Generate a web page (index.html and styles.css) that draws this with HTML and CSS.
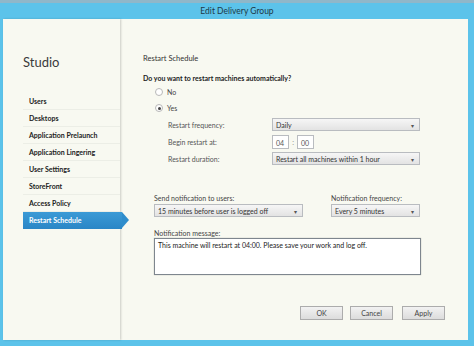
FILE: index.html
```html
<!DOCTYPE html>
<html lang="en">
<head>
  <meta charset="UTF-8">
  <title>Edit Delivery Group</title>
  <link rel="stylesheet" href="styles.css">
</head>
<body>
  <div class="screen">
    <div class="top-strip"></div>
    <div class="title-bar">Edit Delivery Group</div>

    <div class="window-body">
      <!-- left nav -->
      <div class="sidebar">
        <div class="studio">Studio</div>
        <ul class="nav">
          <li>Users</li>
          <li>Desktops</li>
          <li>Application Prelaunch</li>
          <li>Application Lingering</li>
          <li>User Settings</li>
          <li>StoreFront</li>
          <li>Access Policy</li>
          <li class="active">Restart Schedule</li>
        </ul>
      </div>

      <!-- page -->
      <div class="main">
        <div class="page-title">Restart Schedule</div>
        <div class="question">Do you want to restart machines automatically?</div>

        <div class="radio-row"><span class="radio"></span>No</div>
        <div class="radio-row"><span class="radio checked"></span>Yes</div>

        <div class="settings">
          <div class="setting-row">
            <span class="setting-label">Restart frequency:</span>
            <div class="select wide">Daily<span class="caret">▾</span></div>
          </div>
          <div class="setting-row">
            <span class="setting-label">Begin restart at:</span>
            <div class="time">
              <div class="time-box">04</div>
              <span class="colon">:</span>
              <div class="time-box">00</div>
            </div>
          </div>
          <div class="setting-row">
            <span class="setting-label">Restart duration:</span>
            <div class="select wide">Restart all machines within 1 hour<span class="caret">▾</span></div>
          </div>
        </div>

        <div class="notify">
          <div class="notify-col">
            <div class="field-label">Send notification to users:</div>
            <div class="select notify-select">15 minutes before user is logged off<span class="caret">▾</span></div>
          </div>
          <div class="notify-col">
            <div class="field-label">Notification frequency:</div>
            <div class="select freq-select">Every 5 minutes<span class="caret">▾</span></div>
          </div>
        </div>

        <div class="field-label">Notification message:</div>
        <div class="message">This machine will restart at 04:00. Please save your work and log off.</div>

        <div class="buttons">
          <button class="btn">OK</button>
          <button class="btn">Cancel</button>
          <button class="btn apply">Apply</button>
        </div>
      </div>
    </div>
  </div>
</body>
</html>
```

FILE: styles.css
```css
body, html {
  margin: 0;
  padding: 0;
  width: 100%;
  height: 100%;
  overflow: hidden;
}

.screen {
  width: 474px;
  height: 346px;
  background: #5cc3ea;
  display: flex;
  flex-direction: column;
  font-family: Lato, "Open Sans", sans-serif;
  color: #333;
}

.top-strip {
  height: 3px;
  background: #8fb7c9;
}

.title-bar {
  height: 16px;
  line-height: 16px;
  text-align: center;
  font-size: 8.5px;
  color: #1e3a48;
}

.window-body {
  flex: 1;
  margin: 0 6px 6px 3px;
  background: #f8f9f1;
  display: flex;
}

/* left nav */
.sidebar {
  width: 117px;
  padding-top: 35px;
  box-shadow: 1px 0 2px rgba(0, 0, 0, 0.18);
  position: relative;
  z-index: 1;
}

.studio {
  padding-left: 20px;
  font-size: 13px;
  color: #3b3b3b;
  height: 39px;
}

.nav {
  list-style: none;
  margin: 0;
  padding: 0 0 0 20px;
}

.nav li {
  height: 17px;
  line-height: 17px;
  padding-left: 6px;
  font-size: 7px;
  font-weight: bold;
  color: #222;
  border-bottom: 1px solid #eceee6;
  box-sizing: border-box;
  white-space: nowrap;
}

.nav li.active {
  position: relative;
  margin-right: -2px;
  color: #fff;
  background: linear-gradient(#3b9ad6, #2a86c6);
  border-bottom: none;
}

.nav li.active::after {
  content: "";
  position: absolute;
  right: -7px;
  top: 0;
  border-left: 7px solid #2f8dcc;
  border-top: 8.5px solid transparent;
  border-bottom: 8.5px solid transparent;
}

/* page */
.main {
  flex: 1;
  padding: 35px 0 0 23px;
  font-size: 7px;
}

.page-title {
  font-size: 7.5px;
  color: #333;
  height: 20px;
}

.question {
  font-weight: bold;
  color: #222;
  height: 10px;
}

.radio-row {
  display: flex;
  align-items: center;
  height: 16px;
  padding-left: 12px;
  color: #444;
}

.radio {
  width: 6px;
  height: 6px;
  border: 1px solid #b8b8b8;
  border-radius: 50%;
  background: #fff;
  margin-right: 4px;
  display: flex;
  align-items: center;
  justify-content: center;
}

.radio.checked::after {
  content: "";
  width: 3px;
  height: 3px;
  border-radius: 50%;
  background: #444;
}

.settings {
  padding: 0 0 0 25px;
}

.setting-row {
  display: flex;
  align-items: center;
  height: 17px;
  color: #555;
}

.setting-label {
  width: 104px;
}

.select {
  position: relative;
  height: 13px;
  line-height: 13px;
  box-sizing: border-box;
  padding-left: 3px;
  border: 1px solid #b9bcc0;
  background: linear-gradient(#f6f6f6, #e3e3e3);
  color: #333;
  white-space: nowrap;
}

.caret {
  position: absolute;
  right: 5px;
  top: 0;
  font-size: 6px;
  color: #555;
}

.wide {
  width: 148px;
}

.time {
  display: flex;
  align-items: center;
}

.time-box {
  width: 17px;
  height: 14px;
  line-height: 14px;
  box-sizing: border-box;
  padding-left: 3px;
  border: 1px solid #b9bcc0;
  background: #fff;
}

.colon {
  width: 8px;
  text-align: center;
  color: #888;
}

.notify {
  display: flex;
  margin: 27px 0 0 11px;
  height: 29px;
}

.notify-col {
  margin-right: 28px;
}

.field-label {
  color: #444;
  height: 9px;
}

.notify .field-label {
  height: 10px;
}

.notify-select {
  width: 149px;
}

.freq-select {
  width: 89px;
}

.main > .field-label {
  margin-left: 11px;
  margin-top: 6px;
  height: 9px;
}

.message {
  margin: 0 0 0 11px;
  width: 267px;
  height: 37px;
  box-sizing: border-box;
  padding: 2px 3px;
  border: 1px solid #7e868e;
  background: #fff;
  color: #222;
  box-shadow: 0 0 1px rgba(0, 0, 0, 0.3);
}

.buttons {
  display: flex;
  margin: 31px 0 0 157px;
  gap: 7px;
}

.btn {
  width: 43px;
  height: 14px;
  padding: 0;
  font-family: Lato, "Open Sans", sans-serif;
  font-size: 7px;
  color: #444;
  border: 1px solid #acacac;
  background: linear-gradient(#f2f2f2, #dcdcdc);
}

.btn.apply {
  margin-left: 2px;
}
```
